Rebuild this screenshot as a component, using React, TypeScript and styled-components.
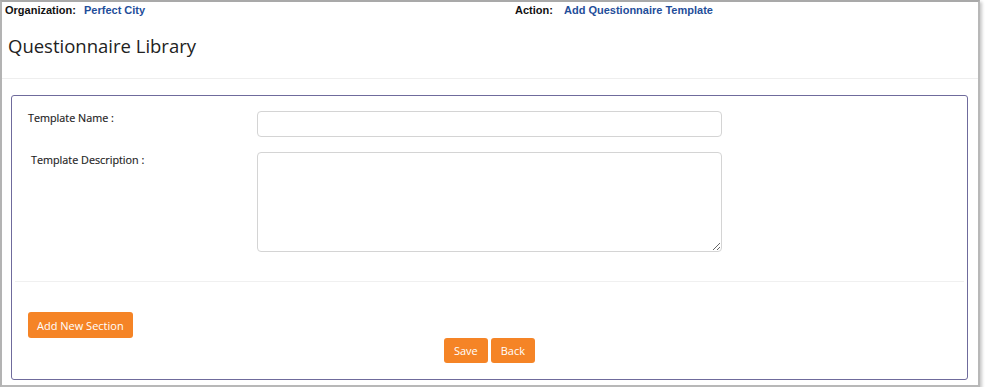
import React from "react";
import styled, { createGlobalStyle } from "styled-components";

const Global = createGlobalStyle`
  html, body { margin: 0; padding: 0; background: #ffffff; }
  * { box-sizing: border-box; }
`;

const Frame = styled.div`
  width: 980px;
  height: 387px;
  border-top: 2px solid #a9a9a9;
  border-left: 2px solid #b3b3b3;
  border-right: 2px solid #b8b8b8;
  border-bottom: 2px solid #b8b8b8;
  box-shadow: 2px 2px 3px #c8c8c8;
  background: #fff;
  display: flex;
  flex-direction: column;
`;

const InfoBar = styled.div`
  display: flex;
  height: 16px;
  align-items: center;
  font-family: "Liberation Sans", Arial, sans-serif;
  font-weight: bold;
  font-size: 11px;
  padding-left: 3px;
`;

const InfoGroup = styled.div<{ $w?: number }>`
  display: flex;
  width: ${(p) => (p.$w ? `${p.$w}px` : "auto")};
`;

const InfoLabel = styled.span<{ $w: number }>`
  color: #111;
  width: ${(p) => p.$w}px;
`;

const InfoValue = styled.span`
  color: #1f4e9a;
`;

const TitleArea = styled.div`
  height: 61px;
  border-bottom: 1px solid #eeeeee;
  padding: 16px 0 0 6px;
`;

const Title = styled.h1`
  margin: 0;
  font-family: "Open Sans", sans-serif;
  font-weight: 400;
  font-size: 18.5px;
  line-height: 24px;
  color: #222;
`;

const Card = styled.div`
  margin: 16px 0 0 9px;
  width: 957px;
  height: 285px;
  border: 1px solid #6f6b9c;
  border-radius: 3px;
  display: flex;
  flex-direction: column;
`;

const FormArea = styled.div`
  display: flex;
  flex-direction: column;
  gap: 15px;
  padding: 15px 0 0 13px;
  height: 186px;
  border-bottom: 1px solid #f0f0f0;
  margin: 0 3px;
`;

const Row = styled.div`
  display: flex;
  align-items: flex-start;
`;

const Label = styled.label<{ $indent?: number }>`
  width: 229px;
  padding-left: ${(p) => p.$indent ?? 0}px;
  padding-top: ${(p) => (p.$indent ? 1 : 0)}px;
  font-family: "Open Sans", sans-serif;
  font-size: 10.8px;
  font-weight: 500;
  line-height: 14px;
  color: #1a1a1a;
  -webkit-text-stroke: 0.15px #1a1a1a;
`;

const TextInput = styled.input`
  width: 465px;
  height: 26px;
  border: 1px solid #d4d4d4;
  border-radius: 4px;
  outline: none;
  margin: 0;
`;

const TextArea = styled.textarea`
  width: 465px;
  height: 100px;
  border: 1px solid #d4d4d4;
  border-radius: 4px;
  outline: none;
  margin: 0;
  resize: vertical;
`;

const Actions = styled.div`
  display: flex;
  flex-direction: column;
  padding: 30px 0 0 16px;
`;

const Button = styled.button<{ $h?: number; $px?: number }>`
  background: #f58426;
  color: #fff;
  border: none;
  border-radius: 3px;
  font-family: "Open Sans", sans-serif;
  font-size: 11px;
  font-weight: 500;
  height: ${(p) => p.$h ?? 26}px;
  padding: 0 ${(p) => p.$px ?? 10}px;
  cursor: pointer;
`;

const LeftAlign = styled.div`
  display: flex;
`;

const Center = styled.div`
  display: flex;
  justify-content: center;
  gap: 3px;
  margin-left: -16px;
`;

export default function App() {
  return (
    <>
      <Global />
      <Frame>
        <InfoBar>
          <InfoGroup $w={510}>
            <InfoLabel $w={79}>Organization:</InfoLabel>
            <InfoValue>Perfect City</InfoValue>
          </InfoGroup>
          <InfoGroup>
            <InfoLabel $w={49}>Action:</InfoLabel>
            <InfoValue>Add Questionnaire Template</InfoValue>
          </InfoGroup>
        </InfoBar>
        <TitleArea>
          <Title>Questionnaire Library</Title>
        </TitleArea>
        <Card>
          <FormArea>
            <Row>
              <Label>Template Name :</Label>
              <TextInput />
            </Row>
            <Row>
              <Label $indent={3}>Template Description :</Label>
              <TextArea />
            </Row>
          </FormArea>
          <Actions>
            <LeftAlign>
              <Button $px={9}>Add New Section</Button>
            </LeftAlign>
            <Center>
              <Button $h={25}>Save</Button>
              <Button $h={25}>Back</Button>
            </Center>
          </Actions>
        </Card>
      </Frame>
    </>
  );
}
